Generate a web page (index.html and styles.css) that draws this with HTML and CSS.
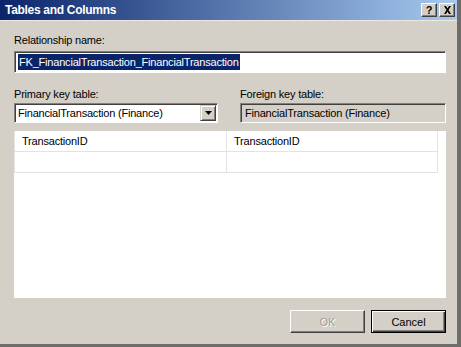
FILE: index.html
```html
<!DOCTYPE html>
<html lang="en">
<head>
    <meta charset="UTF-8">
    <title>Tables and Columns</title>
    <link rel="stylesheet" href="styles.css">
</head>
<body>
    <div class="window">
        <div class="title-bar">
            <span class="title">Tables and Columns</span>
            <div class="title-buttons">
                <span class="title-btn">?</span>
                <span class="title-btn">
                    <svg width="9" height="8" viewBox="0 0 9 8">
                        <path d="M1 0h2l1.5 2.5L6 0h2L5.5 4L8 8H6L4.5 5.5L3 8H1l2.5-4z" fill="#000"/>
                    </svg>
                </span>
            </div>
        </div>

        <div class="content">
            <label class="label">Relationship name:</label>
            <div class="textbox"><span class="selected">FK_FinancialTransaction_FinancialTransaction</span></div>

            <div class="tables">
                <div class="field">
                    <label class="label">Primary key table:</label>
                    <div class="combo">
                        <span>FinancialTransaction (Finance)</span>
                        <span class="combo-btn">
                            <svg width="7" height="4" viewBox="0 0 7 4"><path d="M0 0h7L3.5 4z" fill="#000"/></svg>
                        </span>
                    </div>
                </div>
                <div class="field">
                    <label class="label">Foreign key table:</label>
                    <div class="readonly">FinancialTransaction (Finance)</div>
                </div>
            </div>

            <div class="grid">
                <div class="grid-row">
                    <div class="cell">TransactionID</div>
                    <div class="cell">TransactionID</div>
                </div>
                <div class="grid-row">
                    <div class="cell"></div>
                    <div class="cell"></div>
                </div>
            </div>

            <div class="actions">
                <button class="btn" disabled>OK</button>
                <button class="btn default">Cancel</button>
            </div>
        </div>
    </div>
</body>
</html>
```

FILE: styles.css
```css
/* Classic dialog */
body {
    margin: 0;
    background: #d4d0c8;
}

.window {
    width: 461px;
    height: 347px;
    box-sizing: border-box;
    background: #d4d0c8;
    border-right: 4px solid #6f6d69;
    border-bottom: 3px solid #6f6d69;
    font-family: "Liberation Sans", Arial, sans-serif;
    font-size: 11px;
    letter-spacing: -0.2px;
    color: #000;
}

.title-bar {
    height: 20px;
    border-bottom: 1px solid #ece9e2;
    background: linear-gradient(to right, #0a246a, #a6caf0);
    display: flex;
    align-items: center;
    justify-content: space-between;
    padding: 0 2px 0 5px;
}

.title {
    color: #fff;
    font-weight: bold;
    font-size: 12px;
    letter-spacing: -0.3px;
}

.title-buttons {
    display: flex;
    gap: 2px;
}

.title-btn {
    width: 16px;
    height: 14px;
    box-sizing: border-box;
    background: #d4d0c8;
    border: 1px solid;
    border-color: #fff #404040 #404040 #fff;
    box-shadow: inset -1px -1px #808080;
    display: flex;
    align-items: center;
    justify-content: center;
    font-weight: bold;
    font-size: 11px;
    line-height: 1;
}

.content {
    padding: 13px 11px 0 14px;
}

.label {
    display: block;
    line-height: 13px;
}

.textbox {
    margin-top: 4px;
    height: 22px;
    box-sizing: border-box;
    background: #fff;
    border: 1px solid;
    border-color: #808080 #fff #fff #808080;
    box-shadow: inset 1px 1px #404040;
    padding: 2px 3px;
    line-height: 16px;
}

.selected {
    background: #0a246a;
    color: #fff;
    display: inline-block;
    padding: 0 1px;
}

.tables {
    margin-top: 15px;
    display: grid;
    grid-template-columns: 204px 206px;
    column-gap: 22px;
}

.field .label {
    margin-bottom: 2px;
}

.combo,
.readonly {
    height: 20px;
    box-sizing: border-box;
    border: 1px solid;
    border-color: #808080 #fff #fff #808080;
    box-shadow: inset 1px 1px #404040;
    display: flex;
    align-items: center;
}

.combo {
    background: #fff;
    justify-content: space-between;
    padding: 0 1px 0 3px;
}

.combo-btn {
    width: 16px;
    height: 16px;
    box-sizing: border-box;
    background: #d4d0c8;
    border: 1px solid;
    border-color: #d4d0c8 #404040 #404040 #d4d0c8;
    box-shadow: inset 1px 1px #fff, inset -1px -1px #808080;
    display: flex;
    align-items: center;
    justify-content: center;
}

.readonly {
    background: #d4d0c8;
    padding: 0 4px;
}

.grid {
    margin-top: 8px;
    height: 167px;
    background: #fff;
}

.grid-row {
    display: flex;
    width: 424px;
    border-bottom: 1px solid #e3e3e3;
}

.cell {
    height: 20px;
    line-height: 20px;
    padding-left: 7px;
    box-sizing: border-box;
    flex: 0 0 212px;
    border-left: 1px solid #e3e3e3;
}

.cell + .cell {
    border-right: 1px solid #e3e3e3;
}

.actions {
    margin-top: 12px;
    display: flex;
    justify-content: flex-end;
    gap: 6px;
}

.btn {
    width: 75px;
    height: 23px;
    background: #d4d0c8;
    border: 1px solid;
    border-color: #fff #404040 #404040 #fff;
    box-shadow: inset -1px -1px #808080;
    font-family: inherit;
    font-size: 11px;
    padding: 0;
}

.btn:disabled {
    color: #a09e99;
    text-shadow: 1px 1px #fff;
}

.btn.default {
    border: 1px solid #000;
    box-shadow: inset 1px 1px #fff, inset -1px -1px #404040, inset -2px -2px #808080;
    color: #000;
}
```
